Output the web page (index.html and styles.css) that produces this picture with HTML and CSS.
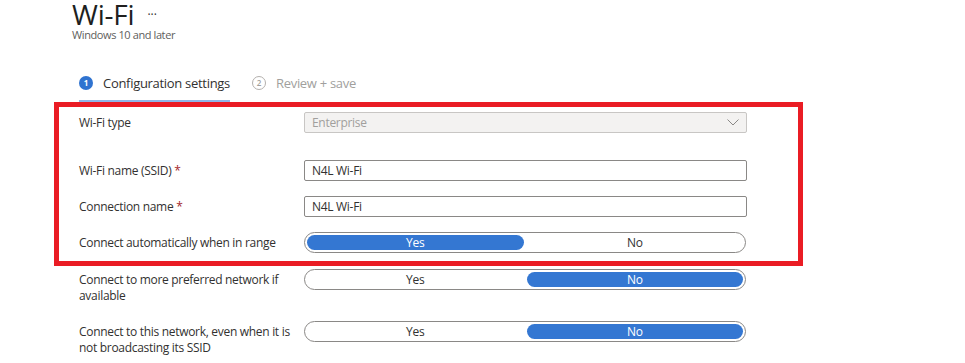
FILE: index.html
```html
<!DOCTYPE html>
<html>
<head>
<meta charset="utf-8">
<link rel="stylesheet" href="styles.css">
</head>
<body>
<div class="page">
  <div class="title-row">
    <h1 class="title">Wi-Fi</h1>
    <span class="more">···</span>
  </div>
  <div class="subtitle">Windows 10 and later</div>

  <div class="tabs">
    <div class="tab active">
      <span class="step step-active">1</span>
      <span class="tab-text">Configuration settings</span>
    </div>
    <div class="tab">
      <span class="step step-idle">2</span>
      <span class="tab-text">Review + save</span>
    </div>
  </div>

  <div class="highlight">
    <div class="row row-first">
      <div class="label">Wi-Fi type</div>
      <div class="control select">
        <span>Enterprise</span>
        <svg class="chev" width="12" height="7" viewBox="0 0 12 7"><polyline points="0.5,0.5 6,6 11.5,0.5" fill="none" stroke="#8a8886" stroke-width="1"/></svg>
      </div>
    </div>
    <div class="row row-gap-lg">
      <div class="label">Wi-Fi name (SSID) <span class="req">*</span></div>
      <div class="control input">N4L Wi-Fi</div>
    </div>
    <div class="row row-gap">
      <div class="label">Connection name <span class="req">*</span></div>
      <div class="control input">N4L Wi-Fi</div>
    </div>
    <div class="row row-gap">
      <div class="label">Connect automatically when in range</div>
      <div class="control toggle">
        <span class="opt on">Yes</span>
        <span class="opt">No</span>
      </div>
    </div>
  </div>

  <div class="rest">
    <div class="row row-top row-after">
      <div class="label">Connect to more preferred network if available</div>
      <div class="control toggle">
        <span class="opt">Yes</span>
        <span class="opt on">No</span>
      </div>
    </div>
    <div class="row row-top row-gap-xl">
      <div class="label">Connect to this network, even when it is not broadcasting its SSID</div>
      <div class="control toggle">
        <span class="opt">Yes</span>
        <span class="opt on">No</span>
      </div>
    </div>
  </div>
</div>
</body>
</html>
```

FILE: styles.css
```css
html, body {
  margin: 0;
  padding: 0;
  background: #ffffff;
}
body {
  font-family: "Open Sans", "Noto Sans", "Liberation Sans", sans-serif;
  color: #323130;
  font-size: 12px;
  letter-spacing: -0.3px;
  overflow: hidden;
}
.page {
  width: 965px;
  height: 363px;
}
.title-row {
  display: flex;
  align-items: center;
  padding-left: 72px;
  height: 28px;
}
.title {
  margin: 0;
  font-size: 28px;
  font-weight: 500;
  line-height: 28px;
  letter-spacing: -0.2px;
  color: #201f1e;
}
.more {
  margin-left: 13px;
  font-size: 12px;
  color: #323130;
  letter-spacing: 0;
}
.subtitle {
  padding-left: 72px;
  margin-top: 0;
  font-size: 11px;
  line-height: 14px;
  letter-spacing: -0.4px;
  color: #605e5c;
}
.tabs {
  display: flex;
  padding-left: 79px;
  margin-top: 33px;
  gap: 22px;
  height: 27px;
}
.tab {
  display: flex;
  align-items: flex-start;
  gap: 10px;
  height: 25px;
  font-size: 13px;
  line-height: 16px;
  color: #a19f9d;
}
.tab.active {
  color: #323130;
  border-bottom: 2px solid #8fb6e8;
}
.step {
  width: 14px;
  height: 14px;
  border-radius: 50%;
  box-sizing: border-box;
  display: flex;
  align-items: center;
  justify-content: center;
  font-size: 8px;
  font-weight: 700;
  line-height: 1;
  letter-spacing: 0;
  margin-top: 1px;
}
.step-active {
  background: #2f73d0;
  color: #ffffff;
}
.step-idle {
  border: 1px solid #b3b0ad;
  color: #a19f9d;
  font-weight: 600;
}
.highlight {
  margin-left: 54px;
  width: 749px;
  box-sizing: border-box;
  border: 5px solid #ea1c24;
  padding: 5px 0 8px 20px;
}
.rest {
  padding-left: 25px;
  margin-left: 54px;
}
.row {
  display: flex;
  align-items: center;
}
.row-top {
  align-items: flex-start;
}
.row-gap-lg { margin-top: 27px; }
.row-gap { margin-top: 15px; }
.row-after { margin-top: 3px; }
.row-gap-xl { margin-top: 18px; }
.label {
  width: 225px;
  flex: none;
  box-sizing: border-box;
  padding-right: 12px;
  font-size: 12px;
  line-height: 15.5px;
  color: #323130;
}
.row-top .label {
  padding-top: 3px;
}
.req {
  color: #a4262c;
}
.control {
  width: 443px;
  height: 21px;
  box-sizing: border-box;
  flex: none;
}
.input, .select {
  border: 1px solid #8a8886;
  border-radius: 2px;
  display: flex;
  align-items: center;
  padding-left: 7px;
  font-size: 12px;
  color: #323130;
}
.select {
  background: #f3f2f1;
  border-color: #c8c6c4;
  color: #a19f9d;
  justify-content: space-between;
  padding-right: 7px;
}
.chev {
  display: block;
}
.toggle {
  width: 442px;
  border: 1px solid #8a8886;
  border-radius: 11px;
  padding: 2px;
  display: flex;
  gap: 3px;
}
.opt {
  flex: 1;
  display: flex;
  align-items: center;
  justify-content: center;
  border-radius: 9px;
  font-size: 12px;
  color: #323130;
}
.opt.on {
  background: #3477d2;
  color: #ffffff;
}
```
